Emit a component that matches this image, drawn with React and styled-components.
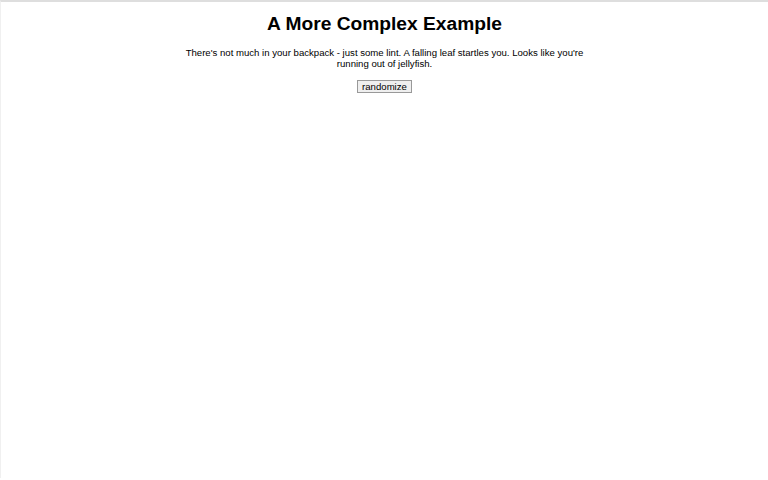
import React, { useState } from "react";
import styled, { createGlobalStyle } from "styled-components";

const GlobalStyle = createGlobalStyle`
  html, body {
    margin: 0;
    background: #fff;
  }
  body {
    font-family: "Liberation Sans", Arial, sans-serif;
    color: #000;
  }
`;

const Frame = styled.div`
  min-height: 478px;
  border-top: 2px solid #dedede;
  border-left: 1px solid #f0f0f0;
  box-sizing: border-box;
`;

const Wrapper = styled.div`
  width: 400px;
  margin: 0 auto;
  padding-top: 11px;
  text-align: center;
`;

const Title = styled.h1`
  font-size: 19.2px;
  line-height: 22px;
  font-weight: bold;
  margin: 0 0 12px;
`;

const Desc = styled.p`
  font-size: 9.6px;
  line-height: 11px;
  margin: 0 0 7px;
`;

const Button = styled.button`
  font-family: "Liberation Sans", Arial, sans-serif;
  font-size: 9.6px;
  line-height: 11px;
  height: 13px;
  padding: 0 4px;
  background: #efefef;
  border: 1px solid #999;
  border-radius: 0;
  color: #000;
`;

const stories = [
  "There's not much in your backpack - just some lint. A falling leaf startles you. Looks like you're running out of jellyfish.",
  "Your backpack is heavy with rocks. A distant bell rings. Looks like you're running out of patience.",
  "There's a sandwich in your backpack. A crow watches you closely. Looks like you're running out of time.",
];

const App = () => {
  const [idx, setIdx] = useState(0);

  return (
    <Frame>
      <GlobalStyle />
      <Wrapper>
        <Title>A More Complex Example</Title>
        <Desc>{stories[idx]}</Desc>
        <Button onClick={() => setIdx((idx + 1) % stories.length)}>randomize</Button>
      </Wrapper>
    </Frame>
  );
};

export default App;
